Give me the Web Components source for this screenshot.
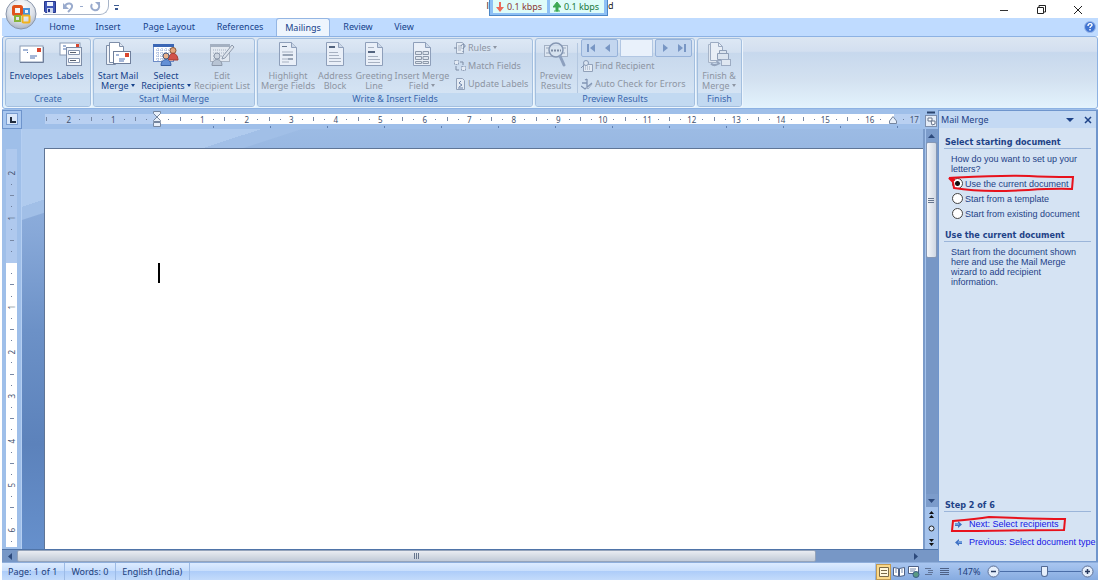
<!DOCTYPE html>
<html lang="en">
<head>
<meta charset="utf-8">
<meta name="viewport" content="width=device-width, initial-scale=1">
<title>Mail Merge</title>
<style>
  html, body { height: 100%; margin: 0; background: #fff; }
  body {
    --ui: "Noto Sans", "Open Sans", sans-serif;
    --pane: "Liberation Sans", Roboto, sans-serif;
    --panehead: "DejaVu Sans Condensed", "DejaVu Sans", sans-serif;
    --navy: #1e4287;
    font: 9px/10px var(--ui);
    color: var(--navy);
  }
</style>
</head>
<body>
<word-app></word-app>

<script>
const ICONS = {
  envelope: [26, 26, `<rect x="2" y="5" width="23" height="16" fill="#fff" stroke="#8a9bb5"/><path d="M2 21.500h23.500V6" fill="none" stroke="#6f7f9b"/><path d="M5 9h5M9 11.500h1M12 15h7M12 17h5" stroke="#4a6fb0"/><rect x="19" y="7" width="4" height="4" fill="#d9462e"/>`],
  labels: [26, 26, `<rect x="3" y="2" width="20" height="12" fill="#fff" stroke="#8a9bb5"/><rect x="19" y="3" width="3" height="3" fill="#d9462e"/><path d="M6 5h3M6 8h3" stroke="#4a6fb0"/><rect x="9.500" y="6.500" width="15" height="18" fill="#eef2f8" stroke="#7e8ea8"/><path d="M11.500 9.500h11v4h-11zM11.500 17.500h11v4h-11z" fill="#fff" stroke="#8796b0"/><path d="M13 11.500h6M13 19.500h6" stroke="#59616f"/>`],
  mailmerge: [26, 26, `<path d="M1.500 4.500h9v19h-9z" fill="#eef2f8" stroke="#7e8ea8"/><path d="M4.500 1.500h10l4 4v16h-14z" fill="#fff" stroke="#7e8ea8"/><path d="M14.500 1.500v4h4" fill="#dfe7f2" stroke="#7e8ea8"/><rect x="8.500" y="10.500" width="17" height="12" fill="#fff" stroke="#6f7f9b"/><rect x="20" y="12" width="4" height="4" fill="#d9462e"/><path d="M11 14h3M14 18h6M14 20h5" stroke="#4a6fb0"/>`],
  recipients: [26, 26, `<rect x=".5" y="3.500" width="20" height="17" fill="#fff" stroke="#6d8cc7"/><rect x="0" y="3" width="21" height="3" fill="#3a66b5"/><path d="M3 9h15M3 12h15M3 15h12M3 18h8M5 7v13M9 7v13M13 7v9M17 7v5" stroke="#8ea6d3" stroke-dasharray="1 1"/><circle cx="20" cy="9.500" r="3" fill="#e4a67c" stroke="#87583a"/><path d="M15.500 19c0-9 9-9 9.500 0z" fill="#d2524a" stroke="#a33a31"/><circle cx="13" cy="15" r="3" fill="#e9b18b" stroke="#465679"/><path d="M8 24.500c0-8 10-8 10 0z" fill="#6490d6" stroke="#3a62a4"/>`],
  edit: [26, 26, `<rect x="1.500" y="3.500" width="19" height="17" fill="#e3e9f1" stroke="#a9b4c3"/><rect x="1" y="3" width="20" height="3" fill="#a4b0c1"/><path d="M4 9h13M4 12h13M4 15h12M4 18h8" stroke="#a5b0c0" stroke-dasharray="1 1"/><path d="M23 4l2 2-9 11-3 1 1-3z" fill="#dce3ec" stroke="#8f9bad"/><circle cx="8" cy="15" r="3" fill="#cdd5e0" stroke="#8c98aa"/><path d="M3 24.500c0-8 10-8 10 0z" fill="#b8c4d4" stroke="#8c98aa"/>`],
  doctop: [26, 26, `<path d="M4.500 1.500h12l5 5v18h-17z" fill="#e9eff8" stroke="#8e9fba"/><path d="M16.500 1.500v5h5" fill="#ccd8e8" stroke="#8e9fba"/><path d="M7 11h11M7 14h11M7 18h11M7 21h7" stroke="#a7b1c1"/><path d="M7 5.500h5M8 14h10M13 18h5" stroke="#68788f"/>`],
  docaddr: [26, 26, `<path d="M4.500 1.500h12l5 5v18h-17z" fill="#e9eff8" stroke="#8e9fba"/><path d="M16.500 1.500v5h5" fill="#ccd8e8" stroke="#8e9fba"/><path d="M7 11.500h9M7 14.500h10M7 17.500h12M7 20.500h12" stroke="#a7b1c1"/><path d="M7 6h6" stroke="#53647f" stroke-width="2"/>`],
  docgreet: [26, 26, `<path d="M4.500 1.500h12l5 5v18h-17z" fill="#e9eff8" stroke="#8e9fba"/><path d="M16.500 1.500v5h5" fill="#ccd8e8" stroke="#8e9fba"/><path d="M7 6.500h6M7 15.500h10M7 18.500h12M7 21.500h12" stroke="#a7b1c1"/><path d="M7 11h7" stroke="#53647f" stroke-width="2"/>`],
  docfield: [26, 26, `<path d="M4.500 1.500h12l5 5v18h-17z" fill="#e9eff8" stroke="#8e9fba"/><path d="M16.500 1.500v5h5" fill="#ccd8e8" stroke="#8e9fba"/><path d="M6.500 10.500h6v3h-6zM14 10.500h5.500v3H14zM6.500 15.500h6v3h-6zM14 15.500h5.500v3H14zM6.500 20.500h6v2h-6zM14 20.500h5.500v2H14z" fill="#dfe6ef" stroke="#8d99aa"/>`],
  preview: [26, 26, `<rect x="1.500" y="4.500" width="23" height="11" fill="#dde6f1" stroke="#a3b1c5"/><path d="M3 7h5M18 7h5M3 12h5M18 12h4" stroke="#9aa9be"/><circle cx="13" cy="9" r="7" fill="#d5e0ee" fill-opacity=".85" stroke="#8597b3" stroke-width="1.500"/><path d="M8 9.500h10" stroke="#7c8ba3" stroke-width="2" stroke-dasharray="2 1"/><path d="M17 15l4 9" stroke="#8da0be" stroke-width="3" stroke-linecap="round"/>`],
  finish: [26, 26, `<path d="M2.500 3.500h8v18h-8z" fill="#dfe7f1" stroke="#a6b4c8"/><path d="M4.500 1.500h8l4 4v14h-12z" fill="#e8eef6" stroke="#9cabc2"/><path d="M12.500 1.500v4h4" fill="none" stroke="#9cabc2"/><path d="M11.500 12.500h11v6h-11zM13.500 9.500h7v3h-7z" fill="#dbe4ef" stroke="#8f9fb7"/><rect x="15.500" y="18.500" width="9" height="6" fill="#dfe7f1" stroke="#9cabc2"/><path d="M5 22.500c2 2 5 2 8 0l-2-2" fill="none" stroke="#94a4bd" stroke-width="2"/>`],
  rules: [12, 12, `<path d="M2.500.5h6l1 1v10h-7z" fill="#e4ebf4" stroke="#9aa9be"/><path d="M4 4h4M4 6h4M4 8h3" stroke="#a7b3c4"/><path d="M7 4c1-3 4-2 4 0s-2 1-2 3M9 9v1" fill="none" stroke="#7386a5"/><path d="M0 6h3" stroke="#7c8ba3"/>`],
  match: [12, 12, `<path d="M.5.5h4v4h-4zM7.500 6.500h4v4h-4z" fill="#e4ebf4" stroke="#91a1b9" stroke-dasharray="2 1"/><path d="M6 2h3v3M5 10H2V6" fill="none" stroke="#7c8ba3"/>`],
  update: [12, 12, `<path d="M2.500.5h6l2 2v9h-8z" fill="#e4ebf4" stroke="#91a1b9"/><path d="M7 3L5 5l3 2-3 2M4 10h5" fill="none" stroke="#6b82a9"/>`],
  find: [12, 12, `<path d="M2.500 4.500h9v7h-9z" fill="#e4ebf4" stroke="#91a1b9"/><path d="M4 7h6M4 9h6" stroke="#91a1b9" stroke-dasharray="1 1"/><circle cx="5" cy="3" r="2.500" fill="#dbe5f1" stroke="#8597b3"/><path d="M3 5L0 8" stroke="#8597b3"/>`],
  check: [12, 12, `<path d="M1 5h5M6 1v8M4 2l2-1M0 8l4 3 7-6" fill="none" stroke="#8194b4" stroke-width="1.300"/><path d="M5 9l2 2 4-5" fill="none" stroke="#9eadc5"/>`],
  first: [12, 12, `<path d="M3 2v8" stroke="#7896c4" stroke-width="2"/><path d="M10 2v8L5 6z" fill="#7896c4"/>`],
  prev: [12, 12, `<path d="M8 2v8L3 6z" fill="#7896c4"/>`],
  next: [12, 12, `<path d="M4 2v8l5-4z" fill="#7896c4"/>`],
  last: [12, 12, `<path d="M2 2v8l5-4z" fill="#7896c4"/><path d="M9 2v8" stroke="#7896c4" stroke-width="2"/>`],
  save: [12, 12, `<path d="M.5.5h11v11h-10l-1-1z" fill="#4058b8" stroke="#26368c"/><rect x="3" y="1" width="6" height="4" fill="#eef3ff"/><rect x="3" y="7" width="6" height="5" fill="#cfd8ef"/><rect x="4" y="8" width="2" height="3" fill="#26368c"/>`],
  undo: [12, 12, `<path d="M3 5c2-4 8-3 7 1-.5 2-2 3-4 5" fill="none" stroke="#9aabcd" stroke-width="2"/><path d="M1 2v6h6z" fill="#9aabcd"/>`],
  redo: [12, 12, `<path d="M3 3a4 4 0 1 0 7 1" fill="none" stroke="#9aabcd" stroke-width="2"/><path d="M6 1h5v5z" fill="#9aabcd"/>`],
  orb: [32, 32, `<defs><radialGradient id="g" cx=".5" cy=".3" r=".7"><stop offset="0" stop-color="#fff"/><stop offset=".6" stop-color="#dfe3ea"/><stop offset="1" stop-color="#a9b3c4"/></radialGradient></defs><circle cx="16" cy="16" r="15" fill="url(#g)" stroke="#8996ab"/><g fill="none"><rect x="8.500" y="8.500" width="8" height="8" rx="1" stroke="#e0531c" stroke-width="3"/><rect x="19" y="11" width="5" height="5" stroke="#4b93d8" stroke-width="2"/><rect x="10" y="18" width="5" height="5" stroke="#86b53a" stroke-width="2"/><rect x="17.500" y="17.500" width="7" height="7" rx="1" stroke="#f2b21d" stroke-width="2"/></g>`],
  min: [10, 10, `<path d="M1 5.500h8" stroke="#333"/>`],
  restore: [10, 10, `<path d="M1.500 2.500h6v6h-6zM3 2V.5h6.500V7H8" fill="none" stroke="#222"/>`],
  close: [10, 10, `<path d="M1 1l8 8M9 1L1 9" stroke="#222"/>`],
  help: [12, 12, `<circle cx="6" cy="6" r="5.500" fill="#3f73d1" stroke="#9bb8e8"/><path d="M4 5c0-3 4-3 4-1 0 1.500-2 1-2 3M6 8v1.500" fill="none" stroke="#fff" stroke-width="1.400"/>`],
  down: [8, 8, `<path d="M0 2h8L4 6z" fill="#1e4287"/>`],
  x: [8, 8, `<path d="M1 1l6 6M7 1L1 7" stroke="#1e4287" stroke-width="1.500"/>`],
  right: [9, 9, `<path d="M1 3h3V1l4 3.500L4 8V6H1z" fill="#3f72c4"/><path d="M1 4h4" stroke="#9ec3f2"/>`],
  left: [9, 9, `<path d="M8 3H5V1L1 4.500 5 8V6h3z" fill="#3f72c4"/><path d="M8 4H4" stroke="#9ec3f2"/>`],
  netdown: [8, 10, `<path d="M3 0h2v5h3L4 10 0 5h3z" fill="#ec6a5a"/>`],
  netup: [8, 10, `<path d="M3 9h2V5h3L4 0 0 5h3zM1 9h6" fill="#3daa55" stroke="#3daa55"/>`],
  tabstop: [20, 19, `<rect x=".5" y=".5" width="19" height="18" fill="#a9c7ef" stroke="#6e94cc"/><rect x="4.500" y="3.500" width="11" height="11" fill="#dbe8fa" stroke="#7a9dd0"/><path d="M9 7v5h5" fill="none" stroke="#222c3c" stroke-width="2"/>`],
  indent: [8, 16, `<path d="M.5.5h7v2L4 6 .5 2.500zM4 6l3.500 3.500v1h-7v-1zM.5 11.500h7v4h-7z" fill="#e8eff9" stroke="#76869f"/>`],
  rindent: [8, 8, `<path d="M4 .5L7.500 5v2.500h-7V5z" fill="#e8eff9" stroke="#76869f"/>`],
  rulerbtn: [12, 16, `<path d="M2 1.500h8" stroke="#2b456f" stroke-width="2"/><rect x=".5" y="4.500" width="11" height="11" fill="#e4ecf7" stroke="#7e8fac"/><path d="M3 7h4v3H3zM6 10h4v3l-3 1z" fill="#fff" stroke="#67748c"/>`],
  vprint: [12, 12, `<path d="M1.500 1.500h9v9h-9z" fill="#fff7dc" stroke="#7a6a48"/><path d="M3 4.500h6M3 7.500h6" stroke="#7a6a48"/>`],
  vread: [12, 12, `<path d="M.5 1.500l5 1v8l-5-1zM11.500 1.500l-5 1v8l5-1z" fill="#fff" stroke="#4d6186"/><path d="M2 4h2M2 6h2M8 4h2M8 6h2" stroke="#7589ad"/>`],
  vweb: [12, 12, `<path d="M.5.5h10v7H.5z" fill="#fff" stroke="#4d6186"/><path d="M2 3h6M2 5h5" stroke="#7589ad"/><circle cx="8" cy="8.500" r="3" fill="#5a9a83" stroke="#3b5f86"/>`],
  vout: [12, 12, `<path d="M2 2.500h6M5 4.500h5M5 6.500h5M2 8.500h7" stroke="#5f7397"/>`],
  vdraft: [12, 12, `<path d="M2 2.500h9M2 4.500h9M2 6.500h9M2 8.500h9" stroke="#4d6186"/>`],
  minus: [13, 13, `<circle cx="6.500" cy="6.500" r="5.500" fill="#e4eefb" stroke="#5d7096"/><path d="M4 6.500h5" stroke="#24375c" stroke-width="1.500"/>`],
  plus: [13, 13, `<circle cx="6.500" cy="6.500" r="5.500" fill="#e4eefb" stroke="#5d7096"/><path d="M4 6.500h5M6.500 4v5" stroke="#24375c" stroke-width="1.500"/>`]
};

function define(name, css, html, setup) {
  const tpl = document.createElement("template");
  tpl.innerHTML = `<style>*{box-sizing:border-box}button{font:inherit;color:inherit;background:none;border:0;padding:0;margin:0}${css}</style>${html}`;
  customElements.define(name, class extends HTMLElement {
    constructor() {
      super();
      this.attachShadow({ mode: "open" }).append(tpl.content.cloneNode(true));
    }
    connectedCallback() { if (setup) setup(this.shadowRoot, this); }
  });
}

define("w-icon", `:host{display:block;flex:none;line-height:0}svg{display:block}`, `<span></span>`, (root, el) => {
  const icon = ICONS[el.getAttribute("name")];
  if (!icon) return;
  const [w, h, body] = icon;
  root.querySelector("span").innerHTML = `<svg width="${w}" height="${h}" viewBox="0 0 ${w} ${h}" aria-hidden="true">${body}</svg>`;
});

define("net-meter", `
  :host{display:flex;gap:3px;padding:0 3px 2px;height:16px;background:#8ec0f5;border:solid #4c87c7;border-width:0 1px 1px}
  div{display:flex;align-items:center;gap:3px;width:54px;padding-left:3px;white-space:nowrap;font-size:9px;background:#defcf9;color:#8c3a34}
  .up{color:#1c7a3e}`,
  `<div><w-icon name="netdown"></w-icon><span>0.1 kbps</span></div><div class="up"><w-icon name="netup"></w-icon><span>0.1 kbps</span></div>`);

define("title-bar", `
  :host{display:grid;grid-template-columns:1fr auto 1fr;height:18px;background:#fff;position:relative}
  .qat{display:flex;align-items:center;gap:5px;height:14px;padding-left:41px}
  .box{display:flex;align-items:center;gap:6px;height:15px;width:66px;padding-left:1px;border:solid #a7b4c8;border-width:0 1px 1px 0;border-radius:0 0 9px 0}
  .dash{width:3px;height:1px;background:#9aabcd}
  .drop{width:5px;height:5px;border-top:1px solid #3c5a90;background:linear-gradient(#3c5a90,#3c5a90) 50% 100%/3px 2px no-repeat}
  .mid{display:flex;align-items:flex-start;color:#222;line-height:12px}
  .win{display:flex;justify-content:flex-end;gap:27px;padding:1px 15px 0 0}
  .orb{position:absolute;left:3px;top:-2px;z-index:2}`,
  `<div class="qat"><div class="box"><button aria-label="Save"><w-icon name="save"></w-icon></button><button aria-label="Undo"><w-icon name="undo"></w-icon></button><span class="dash"></span><button aria-label="Redo"><w-icon name="redo"></w-icon></button></div><button class="drop" aria-label="Customize toolbar"></button></div>
   <div class="mid"><span>l</span><net-meter></net-meter><span>d</span></div>
   <div class="win"><button aria-label="Minimize"><w-icon name="min"></w-icon></button><button aria-label="Restore"><w-icon name="restore"></w-icon></button><button aria-label="Close"><w-icon name="close"></w-icon></button></div>
   <button class="orb" aria-label="Office Button"><w-icon name="orb"></w-icon></button>`);

define("tab-bar", `
  :host{display:flex;height:18px;padding:0 2px 0 38px;background:#bfdbff;font-size:9px}
  button{height:18px;text-align:center;color:#15428b}
  .w44{width:44px}.w48{width:48px}.w74{width:74px}.w68{width:68px}
  .on{width:54px;margin:0 4px 0 2px;background:#eef5fd;border:1px solid #94b6e4;border-bottom:0;border-radius:3px 3px 0 0}
  .help{margin-left:auto}`,
  `<button class="w44">Home</button><button class="w48">Insert</button><button class="w74">Page Layout</button><button class="w68">References</button><button class="on">Mailings</button><button class="w48">Review</button><button class="w44">View</button><button class="help" aria-label="Help"><w-icon name="help"></w-icon></button>`);

define("ribbon-group", `
  :host{display:flex;flex-direction:column;flex:none;height:69px;border:1px solid #a3bfdf;border-radius:3px;background:linear-gradient(#dde8f5,#d3e0f0 20%,#c7d8ec 21%,#d9e7f6);overflow:hidden;box-shadow:1px 1px 0 #edf5fd}
  .body{display:flex;flex:1}
  .cap{height:13px;line-height:12px;text-align:center;background:#c2d9f1;color:#3a68ae}`,
  `<div class="body"><slot></slot></div><div class="cap"></div>`,
  (root, el) => { root.querySelector(".cap").textContent = el.getAttribute("label"); });

define("big-button", `
  :host{display:block;flex:none}
  button{display:flex;flex-direction:column;align-items:center;width:100%;padding-top:2px;gap:4px;white-space:pre;color:#15428b}
  :host([off]) button{color:#8d95a3}`,
  `<button><span><slot></slot></span></button>`,
  (root, el) => {
    const i = document.createElement("w-icon");
    i.setAttribute("name", el.getAttribute("icon"));
    root.querySelector("button").prepend(i);
    el.style.width = el.getAttribute("span") + "px";
  });

define("small-button", `
  :host{display:block;height:18px}
  button{display:flex;align-items:center;gap:2px;height:18px;white-space:nowrap;color:#8d95a3}`,
  `<button><slot name="icon"></slot><span><slot></slot></span></button>`);

define("record-nav", `
  :host{display:flex;gap:2px;height:18px;align-items:center}
  div{display:flex;width:37px;height:18px;align-items:center;justify-content:space-around;border:1px solid #96b2d9;border-radius:2px;background:#c3d6ef}
  input{width:33px;height:18px;padding:0;border:1px solid #b2c7e3;background:#e9f1fb}`,
  `<div><button aria-label="First record"><w-icon name="first"></w-icon></button><button aria-label="Previous record"><w-icon name="prev"></w-icon></button></div><input aria-label="Record"><div><button aria-label="Next record"><w-icon name="next"></w-icon></button><button aria-label="Last record"><w-icon name="last"></w-icon></button></div>`);

define("word-ribbon", `
  :host{display:flex;gap:2px;height:73px;padding:1px 2px;background:linear-gradient(#dce6f2,#d3dff0 20%,#c7d8ed 22%,#d3e1f0 60%,#e3f3fd);border:1px solid #8db2e3;border-radius:3px}
  i{display:inline-block;vertical-align:2px;border:2px solid transparent;border-top:3px solid currentColor;border-bottom:0}
  .col{display:flex;flex-direction:column;padding-left:6px}
  .pr{padding-left:3px;margin-top:4px;margin-left:1px;border-left:1px solid #b3c7e0;height:50px}
  .pr>*{margin-top:-4px;margin-bottom:4px}
  .g1{width:86px}.g2{width:162px}.g3{width:276px}.g4{width:160px}.g5{width:45px}`,
  `<ribbon-group class="g1" label="Create"><big-button span="50" icon="envelope">Envelopes</big-button><big-button span="28" icon="labels">Labels</big-button></ribbon-group>
   <ribbon-group class="g2" label="Start Mail Merge"><big-button span="48" icon="mailmerge">Start Mail
Merge <i></i></big-button><big-button span="48" icon="recipients">Select
Recipients <i></i></big-button><big-button off span="64" icon="edit">Edit
Recipient List</big-button></ribbon-group>
   <ribbon-group class="g3" label="Write &amp; Insert Fields"><big-button off span="60" icon="doctop">Highlight
Merge Fields</big-button><big-button off span="34" icon="docaddr">Address
Block</big-button><big-button off span="44" icon="docgreet">Greeting
Line</big-button><big-button off span="52" icon="docfield">Insert Merge
Field <i></i></big-button><div class="col"><small-button><w-icon slot="icon" name="rules"></w-icon>Rules <i></i></small-button><small-button><w-icon slot="icon" name="match"></w-icon>Match Fields</small-button><small-button><w-icon slot="icon" name="update"></w-icon>Update Labels</small-button></div></ribbon-group>
   <ribbon-group class="g4" label="Preview Results"><big-button off span="40" icon="preview">Preview
Results</big-button><div class="col pr"><record-nav></record-nav><small-button><w-icon slot="icon" name="find"></w-icon>Find Recipient</small-button><small-button><w-icon slot="icon" name="check"></w-icon>Auto Check for Errors</small-button></div></ribbon-group>
   <ribbon-group class="g5" label="Finish"><big-button off span="42" icon="finish">Finish &amp;
Merge <i></i></big-button></ribbon-group>`);

define("word-ruler", `
  :host{display:flex;font:8px/9px var(--ui);color:#44536f}
  span{flex:1 1 0;min-width:0;min-height:0;display:flex;align-items:center;justify-content:center;white-space:nowrap}
  .h::before{content:"";width:1px;height:4px;background:#7989a5}
  .q::before{content:"";width:1px;height:1px;background:#6f7f9c}
  :host([vertical]){flex-direction:column}
  :host([vertical]) b{writing-mode:vertical-rl;transform:rotate(180deg)}
  b{font-weight:400}
  :host([vertical]) .h::before{width:4px;height:1px}`,
  ``, (root, el) => {
    const from = +el.getAttribute("from"), to = +el.getAttribute("to");
    for (let k = from; k <= to; k++) {
      const s = document.createElement("span");
      if (k % 4 === 0) { if (k) { const b = document.createElement("b"); b.textContent = Math.abs(k / 4); s.append(b); } }
      else s.className = k % 2 ? "q" : "h";
      root.append(s);
    }
  });

define("document-area", `
  :host{display:grid;grid-template-columns:20px minmax(0,1fr) 15px;grid-template-rows:19px minmax(0,1fr) 13px;min-width:0;min-height:0;background:#9fbfe9}
  .top{position:relative;padding:4px 3px 5px 19px;background:#9fbfe9}
  .top::after{content:"";position:absolute;left:135px;right:15px;bottom:1px;height:2px;background:repeating-linear-gradient(90deg,transparent 0 56px,#5f7fb1 56px 57px)}
  .top word-ruler{height:10px;background:linear-gradient(90deg,transparent 4px,#b9d0f1 4px 13.200%,#fff 13.200% 97%,#b9d0f1 97%)}
  .mark{position:absolute;z-index:1;top:1px;left:131px}
  .rmark{position:absolute;z-index:1;top:6px;right:26px}
  .btn{padding:1px 0 0 2px}
  .left{padding:39px 4px 2px;background:#9fbfe9;border-right:1px solid #b5cff2}
  .left word-ruler{height:100%;box-shadow:0 -19px 0 #afc9ee;background:linear-gradient(#afc9ee 25%,#fff 25%)}
  .canvas{display:flex;padding:19px 0 0 22px;background:linear-gradient(162deg,#b0cbee 0 74px,#a1bfe7 74px 86px,transparent 87px),linear-gradient(#9cbbe4,#87a8d8 25%,#6c91c7 48%,#5c82bb 75%,#6690cc)}
  .page{flex:1;background:#fff;border:solid #5f7596;border-width:1px 0 0 1px;padding:114px 0 0 113px}
  .caret{width:2px;height:20px;background:#000}
  .vs{display:flex;flex-direction:column;align-items:center;background:#a5c3ec;border-left:2px solid #7b9bc9;color:#24406f}
  .arrow{width:12px;height:13px;display:grid;place-items:center;background:#7c9ccb}
  .track{width:12px;flex:1;background:#7797c6}
  .thumb{display:grid;place-items:center;width:11px;height:116px;border:1px solid #8597b5;border-radius:2px;background:linear-gradient(90deg,#f4f6f9,#cfd7e3)}
  .grip{width:6px;height:5px;background:repeating-linear-gradient(#66758d 0 1px,transparent 1px 2px)}
  .nav{display:grid;place-items:center;height:14px;width:12px}
  .hs{grid-column:1/-1;display:flex;background:#7797c6;border-top:1px solid #4f74a8}
  .ha{width:15px;display:grid;place-items:center}
  .ht{flex:0 1 799px;display:grid;place-items:center;background:linear-gradient(#e9ecf1,#c1cad7);border:1px solid #94a3ba;border-radius:2px}
  .ht i{width:5px;height:6px;background:repeating-linear-gradient(90deg,#66758d 0 1px,transparent 1px 2px)}
  .sp{flex:1}.end{width:15px}`,
  `<w-icon name="tabstop"></w-icon>
   <div class="top"><w-icon class="mark" name="indent"></w-icon><w-icon class="rmark" name="rindent"></w-icon><word-ruler from="-10" to="68"></word-ruler></div>
   <w-icon class="btn" name="rulerbtn"></w-icon>
   <div class="left"><word-ruler vertical from="-8" to="25"></word-ruler></div>
   <div class="canvas"><div class="page"><div class="caret"></div></div></div>
   <div class="vs"><div class="arrow"><svg width="7" height="4"><path d="M0 4L3.500 0 7 4z" fill="#2d4a7c"/></svg></div><div class="track"><div class="thumb"><div class="grip"></div></div></div><div class="arrow"><svg width="7" height="4"><path d="M0 0h7L3.500 4z" fill="#2d4a7c"/></svg></div>
     <div class="nav"><svg width="5" height="7"><path d="M0 3L2.500 0 5 3zM0 7l2.500-3L5 7z" fill="#111"/></svg></div><div class="nav"><svg width="7" height="7"><circle cx="3.500" cy="3.500" r="2.500" fill="#dde8f8" stroke="#222"/></svg></div><div class="nav"><svg width="5" height="7"><path d="M0 0h5L2.500 3zM0 4h5L2.500 7z" fill="#111"/></svg></div></div>
   <div class="hs"><div class="ha"><svg width="4" height="7"><path d="M4 0v7L0 3.500z" fill="#2d4a7c"/></svg></div><div class="ht"><i></i></div><div class="sp"></div><div class="ha"><svg width="4" height="7"><path d="M0 0v7l4-3.500z" fill="#2d4a7c"/></svg></div><div class="end"></div></div>`);

define("task-pane", `
  :host{display:flex;flex-direction:column;width:160px;background:#d5e3f3;border:solid #6f95cc;border-width:1px 2px 1px 1px;font:9px/10px var(--pane);color:#1e4287}
  header{display:flex;align-items:center;gap:10px;height:17px;padding:0 4px 0 2px;background:#c4d9f3;font:9px/14px var(--ui)}
  header span{flex:1}
  h2{margin:0 5px;padding:0 1px;font:bold 9px/12px var(--panehead);border-bottom:1px solid #9bb5d9}
  section{padding-top:8px}
  p{margin:5px 16px 0 12px}
  label{display:flex;align-items:center;gap:2px;height:15px;padding-left:13px;white-space:nowrap}
  input{appearance:none;flex:none;width:11px;height:11px;margin:0;border:1px solid #444;border-radius:50%;background:#fff}
  input:checked{background:radial-gradient(#111 0 2px,#fff 3px)}
  .opts{position:relative;margin-top:2px}
  .red{position:absolute;left:8px;pointer-events:none}
  .foot{margin-top:auto;padding:0 0 10px}
  a{display:flex;align-items:center;gap:6px;height:18px;padding-left:15px;white-space:nowrap;color:#1414e6;text-decoration:none}
  .links{padding-top:3px;position:relative}`,
  `<header><span>Mail Merge</span><button aria-label="Pane menu"><w-icon name="down"></w-icon></button><button aria-label="Close pane"><w-icon name="x"></w-icon></button></header>
   <section><h2>Select starting document</h2><p>How do you want to set up your letters?</p>
   <div class="opts"><label><input type="radio" name="d" checked>Use the current document</label><label><input type="radio" name="d">Start from a template</label><label><input type="radio" name="d">Start from existing document</label>
   <svg class="red" style="top:-3px" width="128" height="20" fill="none" stroke="#e8121c" stroke-width="2"><path d="M2 5c20-1 50-3 80-2 16 1 28 1 44 1l-1 12c-30-1-48 2-76 2-18 0-30-1-42-3L6 9 2 5l6 2"/></svg></div></section>
   <section><h2>Use the current document</h2><p>Start from the document shown here and use the Mail Merge wizard to add recipient information.</p></section>
   <div class="foot"><h2>Step 2 of 6</h2><div class="links"><a href="#next"><w-icon name="right"></w-icon>Next: Select recipients</a><a href="#previous"><w-icon name="left"></w-icon>Previous: Select document type</a>
   <svg class="red" style="top:4px" width="120" height="18" fill="none" stroke="#e8121c" stroke-width="2"><path d="M6 5c12-1 24-2 36-4 24 1 50 2 76 2l-1 11c-40 0-70 1-112 1z"/></svg></div></div>`);

define("status-bar", `
  :host{display:flex;height:18px;align-items:center;background:linear-gradient(#dcebff,#c8defc 45%,#aecdf9 50%,#c3dbfb);border-top:1px solid #8eaedb;font-size:9px;color:#1e3f7c}
  .c{height:100%;display:flex;align-items:center;padding:0 7px 0 6px;border-right:1px solid #9dbbe6;white-space:nowrap}
  .right{margin-left:auto;display:flex;align-items:center;height:100%;background:linear-gradient(#a9c6f0,#86abe0);padding:0 4px 0 1px}
  .v{width:15px;height:16px;display:grid;place-items:center}
  .v.on{background:#fbd98a;border:1px solid #c29a50}
  .z{width:32px;text-align:center;margin:0 2px}
  input{appearance:none;width:81px;height:13px;margin:0;background:linear-gradient(#4b6ea8,#4b6ea8) center/100% 1px no-repeat}
  input::-webkit-slider-thumb{appearance:none;width:7px;height:11px;background:#e6effb;border:1px solid #536a94;border-radius:1px 1px 4px 4px}`,
  `<div class="c">Page: 1 of 1</div><div class="c">Words: 0</div><div class="c">English (India)</div>
   <div class="right"><button class="v on" aria-label="Print Layout"><w-icon name="vprint"></w-icon></button><button class="v" aria-label="Full Screen Reading"><w-icon name="vread"></w-icon></button><button class="v" aria-label="Web Layout"><w-icon name="vweb"></w-icon></button><button class="v" aria-label="Outline"><w-icon name="vout"></w-icon></button><button class="v" aria-label="Draft"><w-icon name="vdraft"></w-icon></button><span class="z">147%</span><button aria-label="Zoom out"><w-icon name="minus"></w-icon></button><input type="range" min="0" max="100" value="56" aria-label="Zoom"><button aria-label="Zoom in"><w-icon name="plus"></w-icon></button></div>`);

define("word-app", `
  :host{display:flex;flex-direction:column;height:100vh;padding:0 2px;overflow:hidden}
  .work{flex:1;display:grid;grid-template-columns:minmax(0,1fr) auto;min-height:0;padding-top:1px;background:#9fbfe9}`,
  `<title-bar></title-bar><tab-bar></tab-bar><word-ribbon></word-ribbon><div class="work"><document-area></document-area><task-pane></task-pane></div><status-bar></status-bar>`);
</script>
</body>
</html>
